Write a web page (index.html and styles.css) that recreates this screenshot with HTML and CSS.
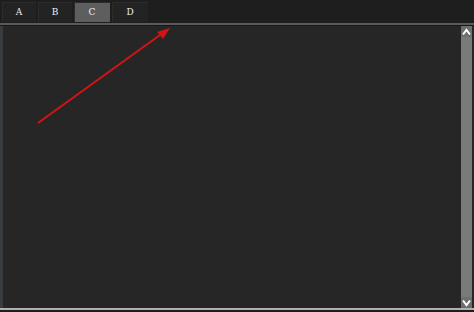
FILE: index.html
```html
<!DOCTYPE html>
<html>
<head>
<meta charset="utf-8">
<link rel="stylesheet" href="styles.css">
</head>
<body>
<div class="app">
  <div class="tabbar">
    <div class="tab">A</div>
    <div class="tab">B</div>
    <div class="tab active">C</div>
    <div class="tab wide">D</div>
  </div>
  <div class="sep"></div>
  <div class="main">
    <div class="canvas">
      <svg class="arrow" width="474" height="290" viewBox="0 0 474 290">
        <line x1="38" y1="98" x2="160" y2="10" stroke="#d41414" stroke-width="2"/>
        <polygon points="170,3 157,7 163,14" fill="#d41414"/>
      </svg>
    </div>
    <div class="scrollbar">
      <div class="sbtn up"><svg width="9" height="8" viewBox="0 0 9 8"><path d="M1 6.5 L4.5 2 L8 6.5" fill="none" stroke="#fff" stroke-width="2"/></svg></div>
      <div class="track"></div>
      <div class="sbtn down"><svg width="9" height="8" viewBox="0 0 9 8"><path d="M1 1.5 L4.5 6 L8 1.5" fill="none" stroke="#fff" stroke-width="2"/></svg></div>
    </div>
  </div>
  <div class="bottom"></div>
</div>
</body>
</html>
```
FILE: styles.css
```css
html, body { margin: 0; padding: 0; background: #1e1e1e; }
.app { width: 474px; height: 312px; display: flex; flex-direction: column; font-family: "DejaVu Serif", "Liberation Serif", serif; }
.tabbar { height: 22px; display: flex; gap: 2px; padding: 2px 0 0 2px; box-sizing: border-box; background: #1e1e1e; }
.tab { width: 34px; height: 20px; background: #232323; color: #f0f0f0; font-size: 9px; display: flex; align-items: center; justify-content: center; box-shadow: inset 1px 1px 0 #2c2c2c; }
.tab.active, .tab.wide { width: 36px; }
.tab.active { background: #5e5e5e; }
.sep { height: 2px; background: #5a5a5a; border-bottom: 1px solid #171717; margin-top: 1px; }
.main { flex: 1; display: flex; background: #262626; border-left: 3px solid #3a3d40; }
.canvas { flex: 1; position: relative; overflow: hidden; }
.arrow { position: absolute; left: -3px; top: -1px; }
.scrollbar { width: 11px; margin-right: 2px; display: flex; flex-direction: column; background: #7a7a7a; }
.sbtn { height: 11px; display: flex; align-items: center; justify-content: center; background: #6e6e6e; }
.track { flex: 1; }
.bottom { height: 2px; background: #b0b0b0; margin-bottom: 2px; }
```
